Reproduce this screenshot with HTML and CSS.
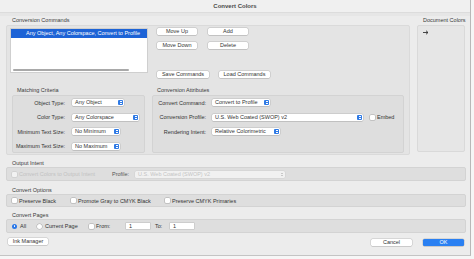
FILE: index.html
```html
<!DOCTYPE html>
<html lang="en">
<head>
  <meta charset="UTF-8" />
  <title>Convert Colors</title>
  <link rel="stylesheet" href="styles.css">
</head>
<body>
  <div class="window">
    <div class="titlebar">Convert Colors</div>
    <div class="strip"></div>

    <div class="top">
      <div class="main">
        <div class="label">Conversion Commands</div>
        <div class="group main-group">
          <div class="commands">
            <div class="listbox">
              <div class="row selected">Any Object, Any Colorspace, Convert to Profile</div>
              <div class="hscroll"></div>
            </div>
            <div class="cmd-buttons">
              <div class="btn-grid">
                <div class="btn w40">Move Up</div>
                <div class="btn w40">Add</div>
                <div class="btn w40">Move Down</div>
                <div class="btn w40">Delete</div>
              </div>
              <div class="btn-row">
                <div class="btn save">Save Commands</div>
                <div class="btn load">Load Commands</div>
              </div>
            </div>
          </div>

          <div class="subgroups">
            <div class="sub matching">
              <div class="label">Matching Criteria</div>
              <div class="box form form-match">
                <span class="flabel">Object Type:</span>
                <div class="select" style="width:52px">Any Object<span class="arrow"></span></div>
                <span class="flabel">Color Type:</span>
                <div class="select" style="width:67px">Any Colorspace<span class="arrow"></span></div>
                <span class="flabel">Minimum Text Size:</span>
                <div class="select" style="width:48px">No Minimum<span class="arrow"></span></div>
                <span class="flabel">Maximum Text Size:</span>
                <div class="select" style="width:48px">No Maximum<span class="arrow"></span></div>
              </div>
            </div>
            <div class="sub attributes">
              <div class="label">Conversion Attributes</div>
              <div class="box form form-attr">
                <span class="flabel">Convert Command:</span>
                <div class="select" style="width:58px">Convert to Profile<span class="arrow"></span></div>
                <span class="flabel">Conversion Profile:</span>
                <div class="field-line">
                  <div class="select" style="width:151px">U.S. Web Coated (SWOP) v2<span class="arrow"></span></div>
                  <span class="check"></span><span class="opt">Embed</span>
                </div>
                <span class="flabel">Rendering Intent:</span>
                <div class="select" style="width:68px">Relative Colorimetric<span class="arrow"></span></div>
              </div>
            </div>
          </div>
        </div>
      </div>

      <div class="doc">
        <div class="label doc-label">Document Colors</div>
        <div class="doc-box">
          <svg class="doc-arrow" width="6" height="5" viewBox="0 0 6 5">
            <path d="M0 2.5H5M3 0.7L5 2.5L3 4.3" fill="none" stroke="#333" stroke-width="0.9"/>
          </svg>
        </div>
      </div>
    </div>

    <div class="section">
      <div class="label">Output Intent</div>
      <div class="box line">
        <span class="check disabled"></span>
        <span class="opt dim">Convert Colors to Output Intent</span>
        <span class="opt profile-label">Profile:</span>
        <div class="select disabled" style="width:150px">U.S. Web Coated (SWOP) v2<span class="arrow grey"></span></div>
      </div>
    </div>

    <div class="section options">
      <div class="label">Convert Options</div>
      <div class="box line">
        <span class="check"></span><span class="opt" style="width:46px">Preserve Black</span>
        <span class="check"></span><span class="opt" style="width:81px">Promote Gray to CMYK Black</span>
        <span class="check"></span><span class="opt">Preserve CMYK Primaries</span>
      </div>
    </div>

    <div class="section pages">
      <div class="label">Convert Pages</div>
      <div class="box line">
        <span class="radio on"></span><span class="opt" style="width:17px">All</span>
        <span class="radio"></span><span class="opt" style="width:44px">Current Page</span>
        <span class="check"></span><span class="opt" style="width:22px">From:</span>
        <div class="input">1</div>
        <span class="opt to">To:</span>
        <div class="input">1</div>
      </div>
    </div>

    <div class="footer">
      <div class="btn ink">Ink Manager</div>
      <div class="footer-right">
        <div class="btn w41">Cancel</div>
        <div class="btn w41 primary">OK</div>
      </div>
    </div>
  </div>
</body>
</html>
```

FILE: styles.css
```css
body {
  margin: 0;
  background: #f6f6f6;
  font-family: "Liberation Sans", Arial, sans-serif;
  font-size: 5.5px;
  color: #333;
}
.window {
  width: 471px;
  height: 256px;
  background: #ececec;
  border-right: 1px solid #b8b8b8;
  border-bottom: 1px solid #c4c4c4;
  box-sizing: border-box;
}
.titlebar {
  height: 12px;
  line-height: 12px;
  text-align: center;
  font-weight: bold;
  font-size: 6px;
  color: #4a4a4a;
  background: #f0f0f0;
  border-bottom: 1px solid #dcdcdc;
}
.strip {
  height: 3px;
  background: #e6e6e6;
}
.label {
  height: 9px;
  line-height: 9px;
  padding-left: 6px;
  color: #3a3a3a;
}
.top {
  display: flex;
}
.main {
  width: 404px;
  margin-left: 6px;
}
.group {
  background: #e4e4e4;
  border: 1px solid #dadada;
  border-radius: 2px;
  box-sizing: border-box;
}
.main-group {
  height: 130px;
  padding: 2px 5px 0 3px;
}
.commands {
  display: flex;
}
.listbox {
  width: 138px;
  height: 45px;
  background: #fff;
  border: 1px solid #cfcfcf;
  box-sizing: border-box;
  position: relative;
}
.row {
  height: 9px;
  line-height: 9px;
  padding-left: 15px;
  white-space: nowrap;
}
.selected {
  background: #1d63d6;
  color: #fff;
}
.hscroll {
  position: absolute;
  left: 2px;
  bottom: 1.5px;
  width: 116px;
  height: 2px;
  border-radius: 1px;
  background: #a9a9a9;
}
.cmd-buttons {
  margin-left: 9px;
}
.btn-grid {
  display: grid;
  grid-template-columns: 40px 40px;
  column-gap: 11px;
  row-gap: 7px;
}
.btn-row {
  display: flex;
  gap: 10px;
  margin-top: 22px;
}
.btn {
  height: 7px;
  line-height: 7px;
  text-align: center;
  background: #fff;
  border-radius: 1.5px;
  box-shadow: 0 0 0 0.5px rgba(0, 0, 0, 0.18), 0 0.5px 0.5px rgba(0, 0, 0, 0.12);
  white-space: nowrap;
}
.w40 { width: 40px; }
.w41 { width: 41px; }
.save { width: 52px; }
.load { width: 51px; }
.subgroups {
  display: flex;
  gap: 7px;
  margin-top: 8px;
  padding-left: 2px;
}
.sub .label {
  height: 9px;
  line-height: 8px;
  padding-left: 5px;
}
.box {
  background: #dedede;
  border: 1px solid #d3d3d3;
  border-radius: 2px;
  box-sizing: border-box;
}
.matching .box {
  width: 133px;
  height: 58px;
}
.attributes .box {
  width: 252px;
  height: 58px;
}
.form {
  display: grid;
  row-gap: 7.5px;
  align-items: center;
  align-content: start;
  padding-top: 3px;
}
.form-match {
  grid-template-columns: 52px auto;
  column-gap: 7px;
}
.form-attr {
  grid-template-columns: 53px auto;
  column-gap: 6px;
}
.flabel {
  text-align: right;
  white-space: nowrap;
}
.select {
  height: 7px;
  line-height: 7px;
  background: #fff;
  border-radius: 1.5px;
  box-shadow: 0 0 0 0.5px rgba(0, 0, 0, 0.15), 0 0.5px 0.5px rgba(0, 0, 0, 0.12);
  padding-left: 3px;
  box-sizing: border-box;
  position: relative;
  white-space: nowrap;
}
.arrow {
  position: absolute;
  right: 1px;
  top: 1px;
  width: 5px;
  height: 5px;
  border-radius: 1px;
  background: #2f7ae5;
}
.arrow::before,
.arrow::after {
  content: "";
  position: absolute;
  left: 1.5px;
  width: 2px;
  height: 1.2px;
  background: #fff;
}
.arrow::before {
  top: 1px;
}
.arrow::after {
  top: 3px;
}
.arrow.grey {
  background: none;
}
.arrow.grey::before,
.arrow.grey::after {
  background: #c8c8c8;
}
.field-line {
  display: flex;
  align-items: center;
}
.field-line .check {
  margin-left: 7px;
}
.check {
  width: 5px;
  height: 5px;
  background: #fff;
  border-radius: 1px;
  box-shadow: 0 0 0 0.5px rgba(0, 0, 0, 0.25);
  flex: none;
}
.check.disabled {
  background: #f2f2f2;
  box-shadow: 0 0 0 0.5px rgba(0, 0, 0, 0.1);
}
.opt {
  margin-left: 2px;
  white-space: nowrap;
}
.dim {
  color: #c2c2c2;
  width: 85px;
}
.profile-label {
  width: 23px;
  color: #555;
}
.select.disabled {
  background: #f1f1f1;
  color: #c4c4c4;
  box-shadow: 0 0 0 0.5px rgba(0, 0, 0, 0.06);
}
.doc {
  width: 48px;
  margin-left: 7px;
}
.doc-label {
  padding-left: 6px;
  white-space: nowrap;
}
.doc-box {
  height: 127px;
  background: #e6e6e6;
  border: 1px solid #d9d9d9;
  border-radius: 2px;
  box-sizing: border-box;
  padding: 4px 0 0 5px;
}
.doc-arrow {
  display: block;
}
.section {
  margin: 5px 0 0 6px;
  width: 460px;
}
.section .label {
  height: 7px;
  line-height: 7px;
}
.section .box {
  height: 14px;
}
.options {
  margin-top: 6px;
}
.options .box {
  height: 13px;
}
.line {
  display: flex;
  align-items: center;
  padding-left: 5px;
}
.line .check + .opt {
  margin-left: 2px;
  margin-right: 6px;
}
.radio {
  width: 5px;
  height: 5px;
  border-radius: 50%;
  background: #fff;
  box-shadow: 0 0 0 0.5px rgba(0, 0, 0, 0.22);
  flex: none;
  box-sizing: border-box;
}
.radio.on {
  background: #2a78e8;
  box-shadow: none;
  position: relative;
}
.radio.on::after {
  content: "";
  position: absolute;
  left: 1.7px;
  top: 1.7px;
  width: 1.6px;
  height: 1.6px;
  border-radius: 50%;
  background: #fff;
}
.radio + .opt {
  margin-left: 3px;
}
.input {
  width: 24px;
  height: 6px;
  line-height: 6px;
  background: #fff;
  padding-left: 3px;
  box-sizing: border-box;
  box-shadow: 0 0 0 0.5px rgba(0, 0, 0, 0.15);
  margin-left: 2px;
}
.to {
  width: 10px;
  margin-left: 5px;
  margin-right: 3px;
}
.footer {
  display: flex;
  justify-content: space-between;
  margin: 5px 6px 0 8px;
}
.ink {
  width: 40px;
}
.footer-right {
  display: flex;
  gap: 11px;
  margin-top: 1px;
}
.primary {
  background: #2a80f2;
  color: #fff;
}
```
